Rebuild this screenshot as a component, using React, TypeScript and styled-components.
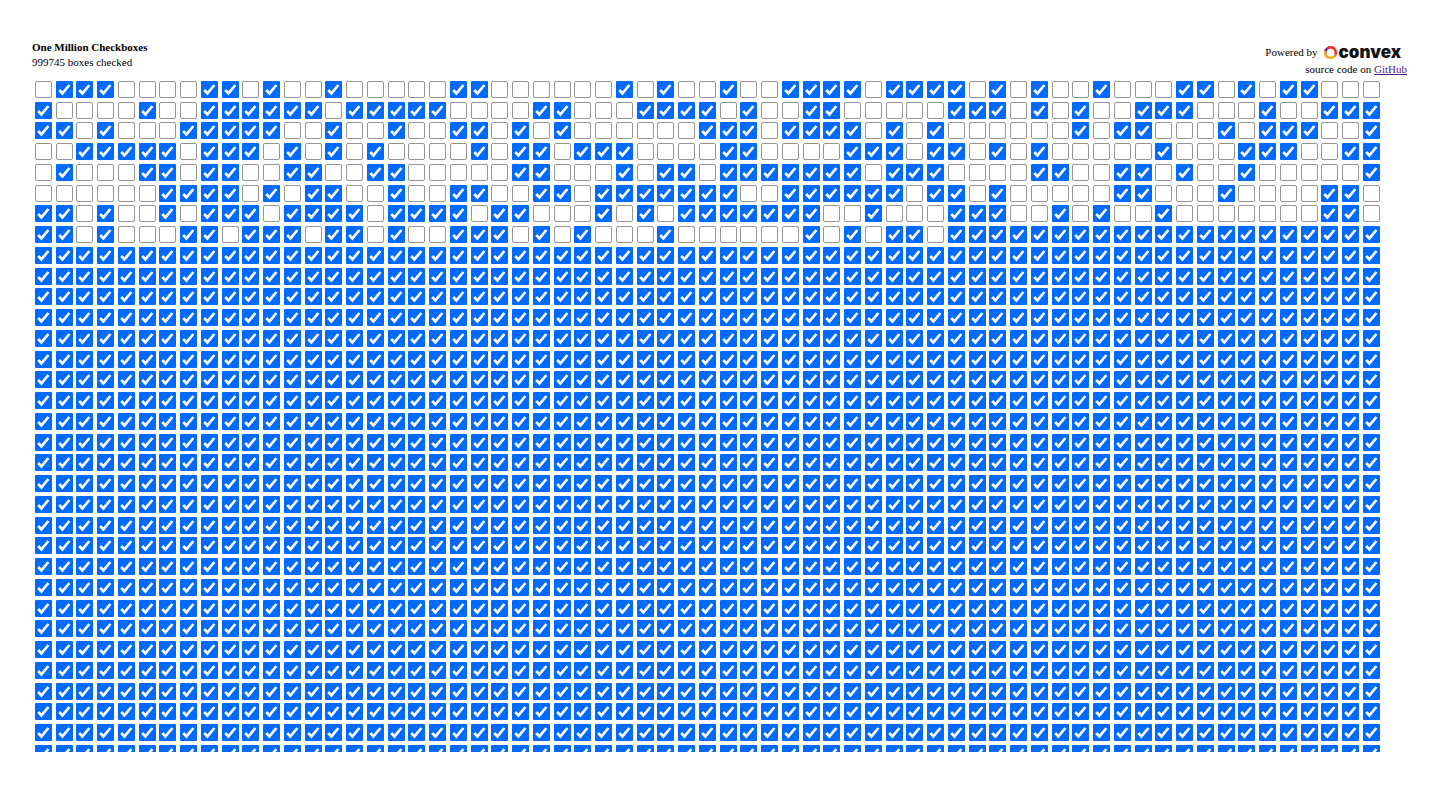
import React, { useState } from "react";
import styled, { createGlobalStyle } from "styled-components";

const COLUMNS = 65;
const ROWS = 40;

/* "X" is a ticked box; rows past the end of this list are fully ticked. */
const OPEN_ROWS = [
  ".XXX....XX.X..X." + "....XX......X.X." + ".X..XXXX.XXXX.X." + "X..X...XX.X.XX...",
  "X....X..XXXXXX.X" + "XXXX....XX...XXX" + "X.X..XX.....XXX." + "X.X..XXX...X..XXX",
  "XX.X...XXXXX..X." + ".X..XX.X.X......" + "XXX.XXXX.X.X...." + "..X.XX...X.XXX..X",
  "..XXXXX.XXX.X.X." + "X....X.XX.XXX..." + ".XX....XXX.XX.X." + "X.....X...XXX..XX",
  ".X...XX.XX..XX.." + "XX.....XX...X.XX" + ".XXXXXXX.XXX...." + "XX..XX.X..X.....X",
  "......XXXX.X.XX." + ".X..XX..XX.XXXXX" + "XX..XXXXXX.XX.X." + "....XX...X....XX.",
  "XX.X..X.XXX.XXXX" + ".XXXX.XX...X.X.X" + "XXXXXX..X...XXX." + ".X.X..X.......XX.",
  "XX.X...XX.XXX.XX" + ".X..XXX.X.X...X." + ".....X.X.XX.XXXX" + "XXXXXXXXXXXXXXXXX",
];

const isTicked = (index: number) => {
  const row = OPEN_ROWS[Math.floor(index / COLUMNS)];
  return !row || row[index % COLUMNS] === "X";
};

const TICK =
  "data:image/svg+xml,%3Csvg xmlns='http://www.w3.org/2000/svg' viewBox='0 0 17 17'%3E%3Cpath d='M3.2 9l3.2 3.4 7-8.4' fill='none' stroke='white' stroke-width='2.7'/%3E%3C/svg%3E";

const GlobalStyle = createGlobalStyle`
  * { box-sizing: border-box; }
  body {
    margin: 0;
    background: #fff;
    color: #000;
    font: 11px/15px "Liberation Serif", "Times New Roman", serif;
  }
`;

const Page = styled.div`
  display: flex;
  flex-direction: column;
  height: 100vh;
  padding: 40px 35px 51px 32px;
`;

const Header = styled.header`
  display: flex;
  justify-content: space-between;
  flex: none;
  height: 39px;
`;

const Title = styled.h1`
  margin: 0;
  font-size: 11px;
  line-height: 15px;
  font-weight: bold;
`;

const Count = styled.div``;

const Credits = styled.div`
  display: flex;
  flex-direction: column;
  align-items: flex-end;
  gap: 2px;
  padding-top: 4px;
`;

const Powered = styled.div`
  display: flex;
  align-items: center;
  gap: 6px;
  height: 16px;
  padding-right: 6px;
`;

const Brand = styled.a`
  display: flex;
  align-items: center;
  gap: 2px;
  color: #141414;
  text-decoration: none;
  font: 900 17px/16px Inter, sans-serif;
`;

const SourceLink = styled.a`
  color: #551a8b;
`;

const Scroller = styled.main`
  flex: 1;
  min-height: 0;
  overflow-y: auto;
  scrollbar-width: none;
  padding: 0 26px 0 1px;
`;

const Grid = styled.div`
  display: grid;
  grid-template-columns: repeat(${COLUMNS}, 1fr);
`;

const Cell = styled.div`
  display: flex;
  align-items: center;
  justify-content: center;
  aspect-ratio: 1;
`;

const Box = styled.input`
  appearance: none;
  width: 17px;
  height: 17px;
  margin: 0;
  border: 1px solid #959595;
  border-radius: 2px;
  background: #fff;

  &:hover {
    border-color: #5c5c5c;
  }

  &:checked {
    border: 0;
    border-radius: 1px;
    background: #006aff url("${TICK}") center / 17px 17px no-repeat;
  }
`;

const ConvexMark = () => (
  <svg width="13" height="13" viewBox="0 0 26 26" aria-hidden="true">
    <path d="M14 0C6 0 0 6 0 13c0 5 3 9 7 12 1-1 1-2 0-4-1-2-2-4-2-7 0-5 4-9 9-9 2 0 4 0 6-2C19 1 17 0 14 0Z" fill="#8d2676" />
    <path d="M11 0c9-1 15 5 15 13 0 4-1 8-5 10-2 0-2-1-1-3 1-2 1-4 1-6 0-5-3-8-8-9C10 4 8 5 6 6c0-3 2-5 5-6Z" fill="#ee342f" />
    <path d="M1 9c2 1 3 2 3 4 1 5 4 8 9 8 4 0 8-2 11-5-1 6-5 10-11 10C6 26 0 21 0 14c0-2 0-4 1-5Z" fill="#f3b01c" />
  </svg>
);

export default function App() {
  const [checked, setChecked] = useState(999745);

  return (
    <>
      <GlobalStyle />
      <Page>
        <Header>
          <div>
            <Title>One Million Checkboxes</Title>
            <Count>{checked} boxes checked</Count>
          </div>
          <Credits>
            <Powered>
              Powered by
              <Brand href="https://convex.dev">
                <ConvexMark />
                convex
              </Brand>
            </Powered>
            <div>
              source code on <SourceLink href="https://github.com">GitHub</SourceLink>
            </div>
          </Credits>
        </Header>
        <Scroller>
          <Grid>
            {Array.from({ length: ROWS * COLUMNS }, (_, index) => (
              <Cell key={index}>
                <Box
                  type="checkbox"
                  aria-label={`Checkbox ${index + 1}`}
                  defaultChecked={isTicked(index)}
                  onChange={(e) => {
                    const step = e.target.checked ? 1 : -1;
                    setChecked((n) => n + step);
                  }}
                />
              </Cell>
            ))}
          </Grid>
        </Scroller>
      </Page>
    </>
  );
}
